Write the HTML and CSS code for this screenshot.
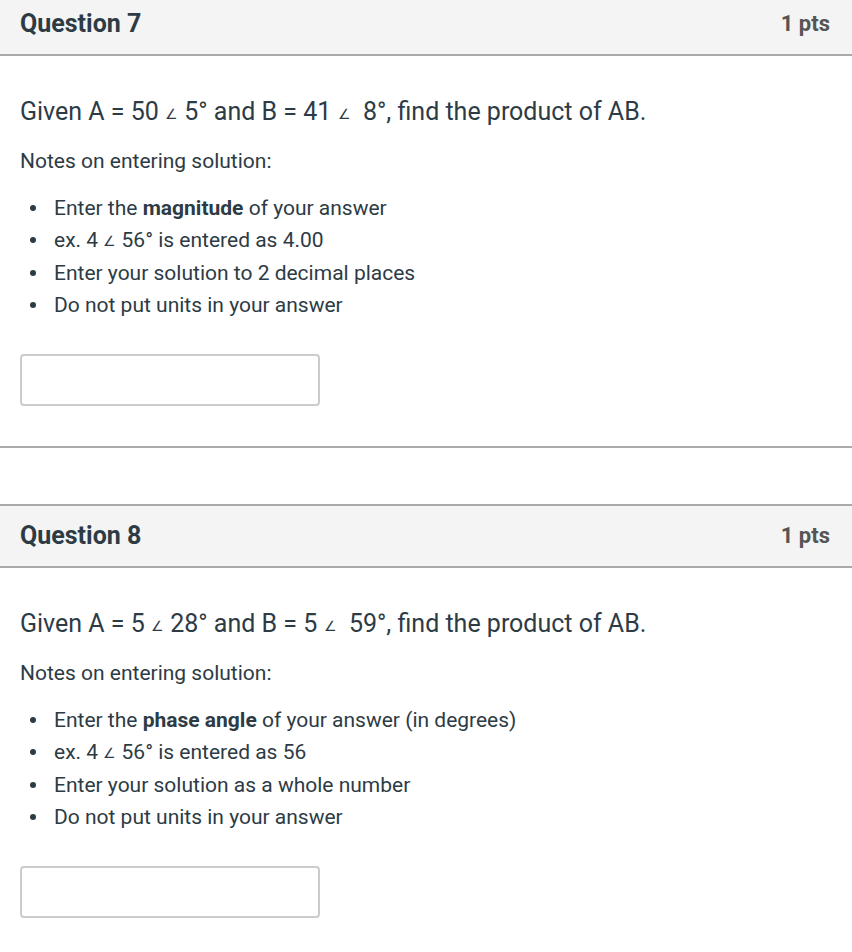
FILE: index.html
```html
<!DOCTYPE html>
<html>
<head>
<meta charset="utf-8">
<link rel="stylesheet" href="styles.css">
</head>
<body>
<div class="page">
  <section class="question first">
    <header class="q-header">
      <h2 class="q-title">Question 7</h2>
      <span class="q-pts">1 pts</span>
    </header>
    <div class="q-body">
      <p class="q-text">Given A = 50 <span class="ang">∠</span> 5° and B = 41 <span class="ang">∠</span>&nbsp; 8°, find the product of AB.</p>
      <p class="q-notes">Notes on entering solution:</p>
      <ul class="q-list">
        <li>Enter the <strong>magnitude</strong> of your answer</li>
        <li>ex. 4 <span class="ang">∠</span> 56° is entered as 4.00</li>
        <li>Enter your solution to 2 decimal places</li>
        <li>Do not put units in your answer</li>
      </ul>
      <input class="q-input" type="text">
    </div>
  </section>
  <section class="question">
    <header class="q-header">
      <h2 class="q-title">Question 8</h2>
      <span class="q-pts">1 pts</span>
    </header>
    <div class="q-body">
      <p class="q-text">Given A = 5 <span class="ang">∠</span> 28° and B = 5 <span class="ang">∠</span>&nbsp; 59°, find the product of AB.</p>
      <p class="q-notes">Notes on entering solution:</p>
      <ul class="q-list">
        <li>Enter the <strong>phase angle</strong> of your answer (in degrees)</li>
        <li>ex. 4 <span class="ang">∠</span> 56° is entered as 56</li>
        <li>Enter your solution as a whole number</li>
        <li>Do not put units in your answer</li>
      </ul>
      <input class="q-input" type="text">
    </div>
  </section>
</div>
</body>
</html>
```

FILE: styles.css
```css
html, body {
  margin: 0;
  padding: 0;
  background: #ffffff;
}
body {
  font-family: Roboto, "Liberation Sans", Arial, sans-serif;
  color: #2d3b45;
}
.page {
  display: flex;
  flex-direction: column;
  gap: 56px;
}
.question {
  border-top: 2px solid #aaaaaa;
  border-bottom: 2px solid #aaaaaa;
}
.question.first {
  margin-top: -8px;
}
.q-header {
  height: 60px;
  background: #f4f4f4;
  border-bottom: 2px solid #aaaaaa;
  display: flex;
  align-items: center;
  justify-content: space-between;
  padding: 0 22px 0 20px;
}
.q-title {
  margin: 0;
  font-size: 25px;
  font-weight: 700;
  color: #2d3b45;
  line-height: 30px;
}
.q-pts {
  font-size: 22px;
  font-weight: 700;
  color: #555555;
  line-height: 30px;
}
.q-body {
  padding: 40px 20px 40px 20px;
}
.q-text {
  margin: 0;
  font-size: 25px;
  line-height: 32px;
}
.ang {
  font-size: 14px;
  vertical-align: 1px;
}
.q-notes {
  margin: 15px 0 0 0;
  font-size: 21px;
  line-height: 32px;
}
.q-list {
  margin: 15px 0 0 0;
  padding: 0 0 0 34px;
  font-size: 21px;
  line-height: 32px;
  list-style: none;
}
.q-list li::before {
  content: "";
  display: inline-block;
  width: 6px;
  height: 6px;
  border-radius: 50%;
  background: #2d3b45;
  margin-left: -24px;
  margin-right: 18px;
  vertical-align: 4px;
}
.q-list strong {
  font-weight: 700;
}
.q-input {
  display: block;
  margin-top: 33px;
  width: 300px;
  height: 52px;
  box-sizing: border-box;
  border: 2px solid #cccccc;
  border-radius: 4px;
  background: #fff;
  padding: 0 8px;
}
```
